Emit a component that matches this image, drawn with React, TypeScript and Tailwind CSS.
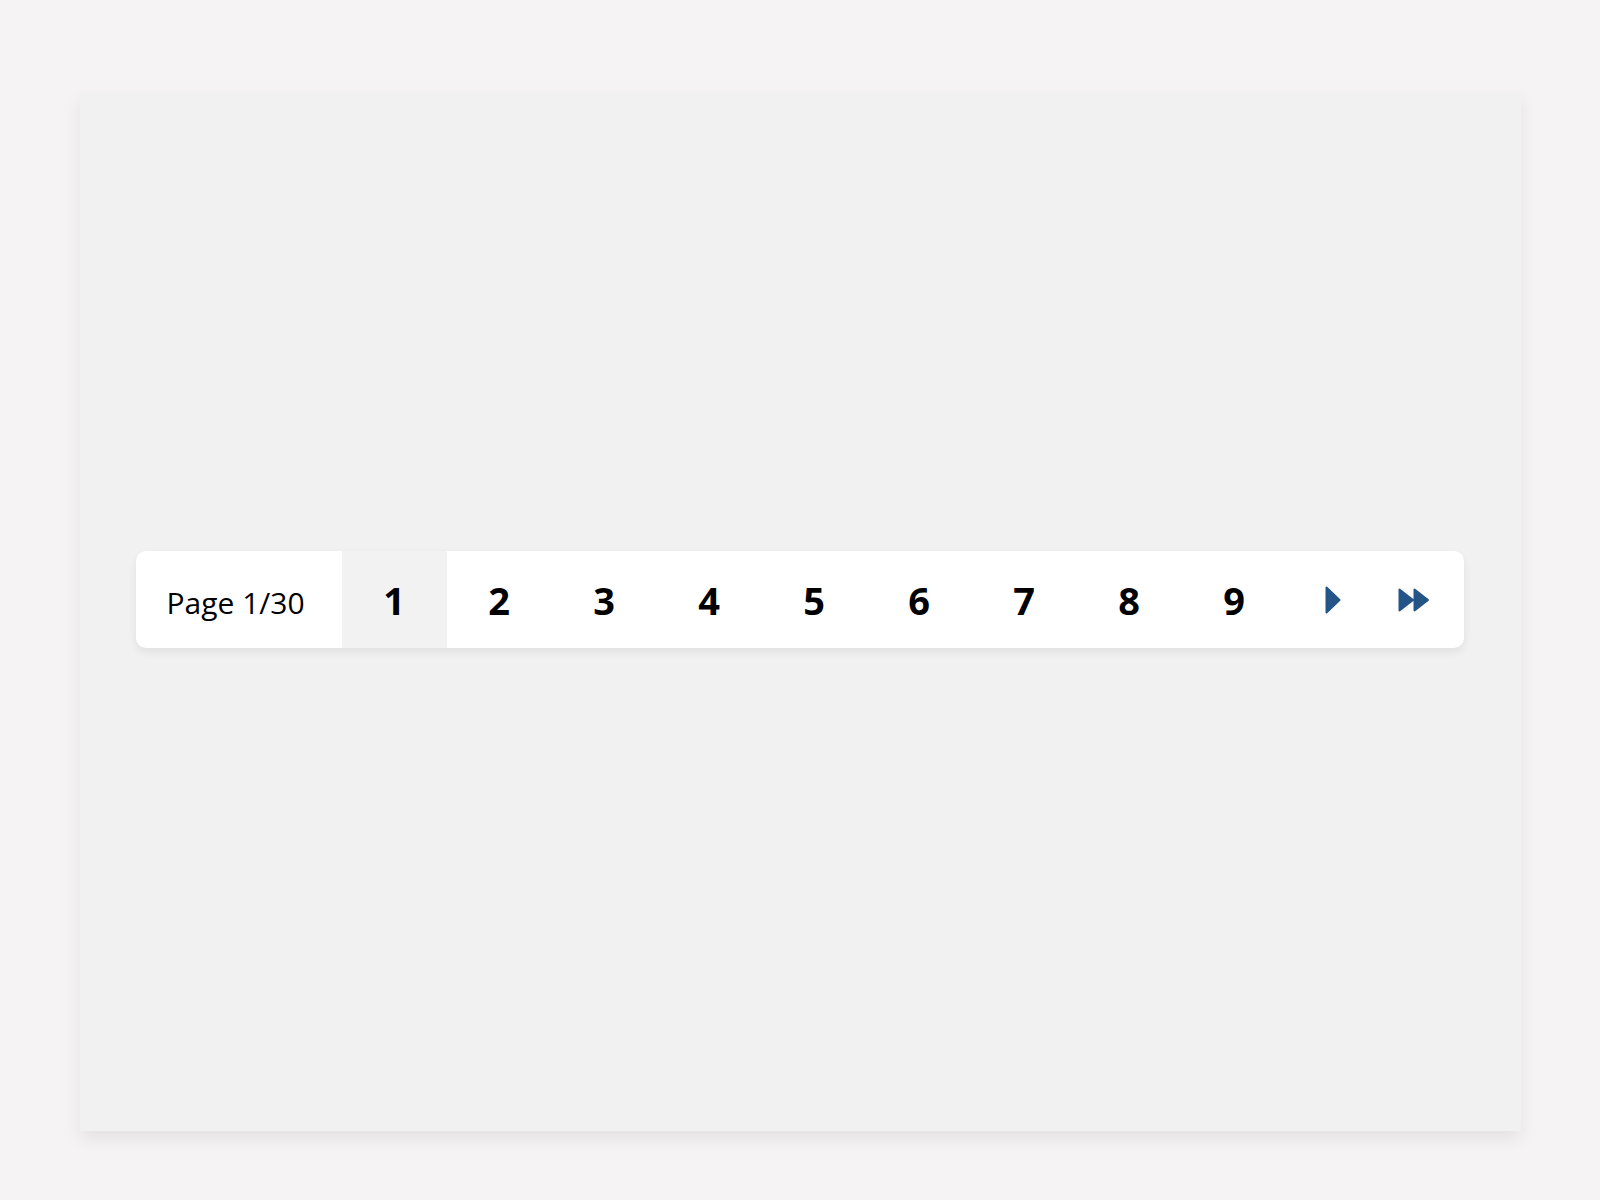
import { useState } from 'react';

const pages = [1, 2, 3, 4, 5, 6, 7, 8, 9];

function CaretRight() {
  return (
    <svg width="16" height="28" viewBox="0 0 16 28" aria-hidden="true">
      <path
        d="M1.5 1.5 L14.5 14 L1.5 26.5 Z"
        fill="#255487"
        stroke="#255487"
        strokeWidth="2"
        strokeLinejoin="round"
      />
    </svg>
  );
}

function Forward() {
  return (
    <svg width="32" height="24" viewBox="0 0 32 24" aria-hidden="true">
      <path
        d="M1.5 1.5 L15 12 L1.5 22.5 Z M16.5 1.5 L30 12 L16.5 22.5 Z"
        fill="#255487"
        stroke="#255487"
        strokeWidth="2"
        strokeLinejoin="round"
      />
    </svg>
  );
}

export default function App() {
  const [current, setCurrent] = useState(1);

  return (
    <div className="min-h-screen bg-[#f5f3f4] pt-[92px] font-['Open_Sans',sans-serif]">
      <div className="mx-auto h-[1039px] w-[1441px] bg-[#f1f1f1] pl-[56px] pr-[57px] pt-[459px] shadow-[0_8px_16px_rgba(0,0,0,0.07)]">
        {/* Pagination bar */}
        <div className="flex h-[97px] items-stretch overflow-hidden rounded-[10px] bg-white text-black shadow-[0_4px_10px_rgba(0,0,0,0.07)]">
          <div className="flex w-[206px] items-center pl-[31px] pt-[6px] text-[30px] leading-none">
            Page {current}/30
          </div>

          {pages.map((p) => (
            <button
              key={p}
              onClick={() => setCurrent(p)}
              className={
                p === current
                  ? 'flex w-[105px] items-center justify-center bg-[#f2f2f2] pt-[1px] text-[38px] font-bold leading-none'
                  : 'flex w-[105px] items-center justify-center pt-[1px] text-[38px] font-bold leading-none'
              }
            >
              {p}
            </button>
          ))}

          <button
            onClick={() => setCurrent((c) => Math.min(c + 1, 30))}
            className="flex w-[93px] items-center justify-center"
          >
            <CaretRight />
          </button>
          <button
            onClick={() => setCurrent(30)}
            className="flex w-[68px] items-center justify-center pt-[1px]"
          >
            <Forward />
          </button>
        </div>
      </div>
    </div>
  );
}
